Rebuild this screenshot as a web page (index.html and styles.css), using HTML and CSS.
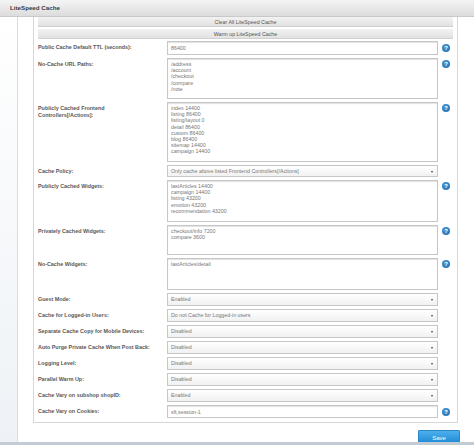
FILE: index.html
```html
<!DOCTYPE html>
<html>
<head>
<meta charset="utf-8">
<link rel="stylesheet" href="styles.css">
</head>
<body>
<div class="header">LiteSpeed Cache</div>
<div class="main">
  <div class="gutter"></div>
  <div class="content">
    <div class="panel">
      <div class="btn b1">Clear All LiteSpeed Cache</div>
      <div class="btn b2">Warm up LiteSpeed Cache</div>

      <div class="row h14"><div class="label">Public Cache Default TTL (seconds):</div><div class="ctl input">86400</div><span class="help">?</span></div>
      <div class="row h41"><div class="label">No-Cache URL Paths:</div><div class="ctl area">/address<br>/account<br>/checkout<br>/compare<br>/note</div><span class="help">?</span></div>
      <div class="row h60"><div class="label">Publicly Cached Frontend<br>Controllers[/Actions]:</div><div class="ctl area">index 14400<br>listing 86400<br>listing/layout 0<br>detail 86400<br>custom 86400<br>blog 86400<br>sitemap 14400<br>campaign 14400</div><span class="help">?</span></div>
      <div class="row h12"><div class="label">Cache Policy:</div><div class="ctl select">Only cache above listed Frontend Controllers[/Actions]</div><span class="nohelp"></span></div>
      <div class="row h42"><div class="label">Publicly Cached Widgets:</div><div class="ctl area">lastArticles 14400<br>campaign 14400<br>listing 43200<br>emotion 43200<br>recommendation 43200</div><span class="help">?</span></div>
      <div class="row h30"><div class="label">Privately Cached Widgets:</div><div class="ctl area">checkout/info 7200<br>compare 3600</div><span class="help">?</span></div>
      <div class="row h32"><div class="label">No-Cache Widgets:</div><div class="ctl area">lastArticles/detail</div><span class="help">?</span></div>
      <div class="row h13"><div class="label">Guest Mode:</div><div class="ctl select">Enabled</div><span class="nohelp"></span></div>
      <div class="row h13"><div class="label">Cache for Logged-in Users:</div><div class="ctl select">Do not Cache for Logged-in users</div><span class="nohelp"></span></div>
      <div class="row h13"><div class="label">Separate Cache Copy for Mobile Devices:</div><div class="ctl select">Disabled</div><span class="nohelp"></span></div>
      <div class="row h13"><div class="label">Auto Purge Private Cache When Post Back:</div><div class="ctl select">Disabled</div><span class="nohelp"></span></div>
      <div class="row h13"><div class="label">Logging Level:</div><div class="ctl select">Disabled</div><span class="nohelp"></span></div>
      <div class="row h13"><div class="label">Parallel Warm Up:</div><div class="ctl select">Disabled</div><span class="nohelp"></span></div>
      <div class="row h13"><div class="label">Cache Vary on subshop shopID:</div><div class="ctl select">Enabled</div><span class="nohelp"></span></div>
      <div class="row h13"><div class="label">Cache Vary on Cookies:</div><div class="ctl input">sft,session-1</div><span class="help">?</span></div>
    </div>
    <div class="actions"><div class="save">Save</div></div>
  </div>
</div>
<div class="footer"></div>
</body>
</html>
```

FILE: styles.css
```css
* { box-sizing: border-box; }
html, body { margin: 0; padding: 0; }
body {
  width: 474px;
  height: 445px;
  overflow: hidden;
  font-family: "Liberation Sans", Arial, sans-serif;
  background: #fff;
  color: #555;
}
.header {
  height: 17px;
  padding-left: 10px;
  line-height: 16px;
  font-size: 6.2px;
  font-weight: bold;
  color: #3a3a3a;
  background: linear-gradient(#f4f4f4, #dcdcdc);
  border-bottom: 1px solid #c9c9c9;
}
.main {
  display: flex;
  height: 425px;
}
.gutter {
  width: 18px;
  background: linear-gradient(#fff, #eef2f6);
  border-right: 1px solid #dadde0;
}
.content {
  flex: 1;
  padding-left: 15px;
  padding-right: 16px;
}
.panel {
  border: 1px solid #d6d6d6;
  border-top: none;
  padding: 0 4px 6px 4px;
  height: 406px;
}
.btn {
  height: 10px;
  line-height: 10px;
  text-align: center;
  font-size: 5.3px;
  color: #555;
  background: linear-gradient(#f2f2f2, #e2e2e2);
  border-bottom: 1px solid #d0d0d0;
  margin-bottom: 2px;
}
.row {
  display: flex;
  align-items: flex-start;
  margin-bottom: 3px;
}
.h12 { height: 12px; } .h13 { height: 13px; } .h14 { height: 14px; }
.h30 { height: 30px; } .h32 { height: 32px; } .h41 { height: 41px; }
.h42 { height: 42px; } .h60 { height: 60px; }
.label {
  width: 129px;
  padding-top: 3px;
  font-size: 5.4px;
  line-height: 7px;
  font-weight: bold;
  color: #585858;
}
.row.h12 .label, .row.h13 .label, .row.h14 .label { padding-top: 0; line-height: 13px; }
.ctl {
  width: 271px;
  height: 100%;
  border: 1px solid #c6c6c6;
  box-shadow: inset 0 1px 1px rgba(0,0,0,0.12);
  background: #fff;
  font-size: 5.3px;
  color: #777;
  padding-left: 3px;
}
.input { line-height: 12px; }
.area { padding-top: 2px; line-height: 6.2px; }
.select {
  position: relative;
  line-height: 11px;
  background: linear-gradient(#fff, #f1f1f1);
  box-shadow: none;
}
.select::after {
  content: "";
  position: absolute;
  right: 4px;
  top: 5px;
  border-left: 1.6px solid transparent;
  border-right: 1.6px solid transparent;
  border-top: 2px solid #444;
}
.help {
  margin-left: 4px;
  margin-top: 3px;
  width: 8px;
  height: 8px;
  border-radius: 50%;
  background: radial-gradient(circle at 40% 35%, #4a97d4, #1c6aad);
  color: #fff;
  font-size: 6px;
  font-weight: bold;
  line-height: 8px;
  text-align: center;
}
.row.h41 .help, .row.h60 .help, .row.h42 .help, .row.h30 .help, .row.h32 .help { margin-top: 2px; }
.actions {
  display: flex;
  justify-content: flex-end;
  margin-right: -2px;
  padding-top: 7px;
}
.save {
  width: 42px;
  height: 14px;
  line-height: 14px;
  text-align: center;
  font-size: 6px;
  color: #fff;
  background: linear-gradient(#4db0ec, #1f8ad4);
  border: 1px solid #2a86c4;
  border-radius: 1px;
}
.footer {
  height: 3px;
  background: #c3ccd4;
  position: relative;
}
```
